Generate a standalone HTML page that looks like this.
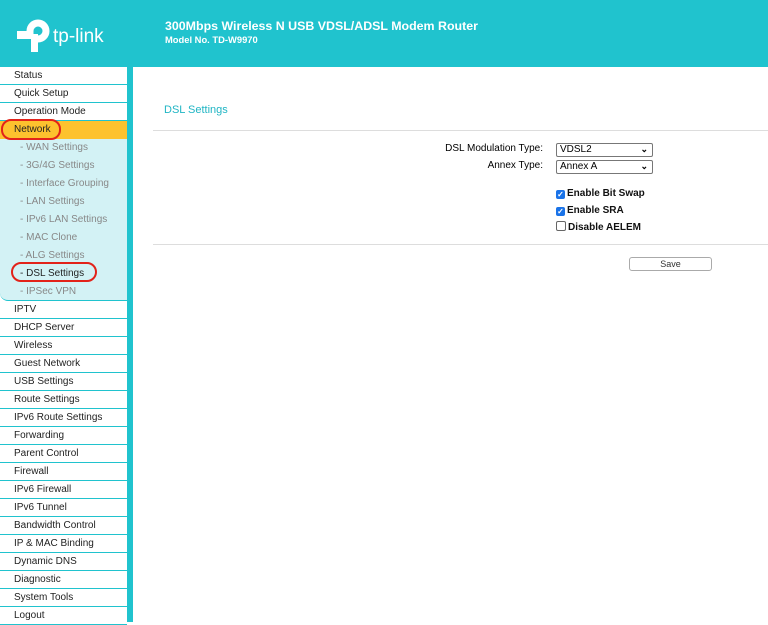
<!DOCTYPE html>
<html><head><style>
body{margin:0;width:768px;height:622px;overflow:hidden;font-family:"Liberation Sans",Arial,sans-serif;background:#fff;position:relative}
.hdr{position:absolute;left:0;top:0;width:768px;height:67px;background:#20c3ce}
.t1{position:absolute;left:165px;top:19px;color:#fff;font-weight:bold;font-size:12.4px}
.t2{position:absolute;left:165px;top:34px;color:#fff;font-weight:bold;font-size:9.4px}
.side{position:absolute;left:0;top:67px;width:127px}
.it{height:17px;border-bottom:1px solid #20c3ce;font-size:10px;line-height:18px;padding-left:14px;color:#222;background:#fff;box-sizing:content-box}
.sub{background:#d3f2f5;border-bottom:1px solid #d3f2f5;color:#888;padding-left:20px}
.bar{position:absolute;left:127px;top:67px;width:6px;height:555px;background:#20c3ce}
.ring{position:absolute;border:2.5px solid #e2231a;border-radius:10px}
.sel{position:absolute;font-size:10px;border:1px solid #777;border-radius:2px;height:12px;line-height:12px;padding-left:3px;width:92px;background:#fff}
.chev{position:absolute;right:4px;top:-1px;font-size:9px;font-weight:bold}
.cb{position:absolute;font-size:10px;font-weight:bold;color:#111}
.box{display:inline-block;width:9px;height:9px;border-radius:2px;vertical-align:-1px;margin-right:2px;color:#fff;font-size:8px;line-height:9px;text-align:center}
</style></head><body>
<div class="hdr">
<svg style="position:absolute;left:0;top:0" width="60" height="60" viewBox="0 0 60 60"><path d="M30 35 V31 A8 8 0 1 1 38 39" stroke="#fff" stroke-width="7" fill="none"/><rect x="31" y="34" width="7" height="18" fill="#fff"/><rect x="17" y="31" width="16" height="8" fill="#fff"/></svg>
<div style="position:absolute;left:53px;top:26px;color:#fff;font-size:19px">tp-link</div>
<div class="t1">300Mbps Wireless N USB VDSL/ADSL Modem Router</div>
<div class="t2">Model No. TD-W9970</div>
</div>
<div class="side">
<div class="it">Status</div><div class="it">Quick Setup</div><div class="it">Operation Mode</div>
<div class="it" style="background:#fdc22e;border-bottom-color:#fdc22e">Network</div>
<div class="it sub">- WAN Settings</div><div class="it sub">- 3G/4G Settings</div><div class="it sub">- Interface Grouping</div><div class="it sub">- LAN Settings</div><div class="it sub">- IPv6 LAN Settings</div><div class="it sub">- MAC Clone</div><div class="it sub">- ALG Settings</div><div class="it sub" style="color:#222">- DSL Settings</div><div class="it sub" style="border-bottom:1px solid #20c3ce;border-bottom-left-radius:8px">- IPSec VPN</div>
<div class="it">IPTV</div><div class="it">DHCP Server</div><div class="it">Wireless</div><div class="it">Guest Network</div><div class="it">USB Settings</div><div class="it">Route Settings</div><div class="it">IPv6 Route Settings</div><div class="it">Forwarding</div><div class="it">Parent Control</div><div class="it">Firewall</div><div class="it">IPv6 Firewall</div><div class="it">IPv6 Tunnel</div><div class="it">Bandwidth Control</div><div class="it">IP &amp; MAC Binding</div><div class="it">Dynamic DNS</div><div class="it">Diagnostic</div><div class="it">System Tools</div><div class="it">Logout</div>
</div>
<div class="ring" style="left:1px;top:119px;width:56px;height:17px"></div>
<div class="ring" style="left:11px;top:262px;width:82px;height:16px"></div>
<div class="bar"></div>
<div style="position:absolute;left:164px;top:104px;color:#20b5c4;font-size:11px">DSL Settings</div>
<div style="position:absolute;left:153px;top:130px;width:615px;height:1px;background:#ddd"></div>
<div style="position:absolute;left:300px;top:143px;width:243px;text-align:right;font-size:10px">DSL Modulation Type:</div>
<div style="position:absolute;left:300px;top:160px;width:243px;text-align:right;font-size:10px">Annex Type:</div>
<div class="sel" style="left:556px;top:143px">VDSL2<span class="chev">&#8964;</span></div>
<div class="sel" style="left:556px;top:160px">Annex A<span class="chev">&#8964;</span></div>
<div class="cb" style="left:556px;top:188px"><span class="box" style="background:#1a73e8">&#10003;</span>Enable Bit Swap</div>
<div class="cb" style="left:556px;top:205px"><span class="box" style="background:#1a73e8">&#10003;</span>Enable SRA</div>
<div class="cb" style="left:556px;top:221px"><span class="box" style="border:1px solid #666;width:8px;height:8px"></span>Disable AELEM</div>
<div style="position:absolute;left:153px;top:244px;width:615px;height:1px;background:#ddd"></div>
<div style="position:absolute;left:629px;top:257px;width:81px;height:12px;border:1px solid #aaa;border-radius:3px;font-size:9px;text-align:center;line-height:12px;color:#333">Save</div>
</body></html>
